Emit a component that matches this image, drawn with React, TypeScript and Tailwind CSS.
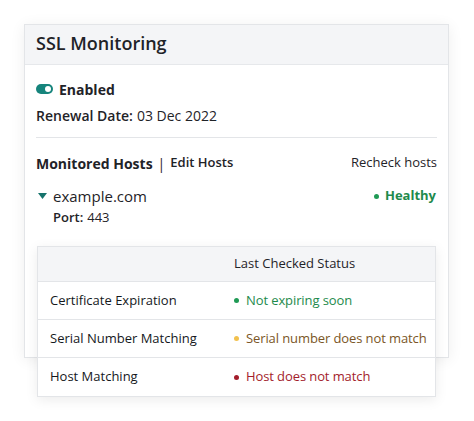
import React from 'react';

type Check = {
  label: string;
  status: string;
  dot: string;
  text: string;
};

const checks: Check[] = [
  { label: 'Certificate Expiration', status: 'Not expiring soon', dot: 'bg-[#1f9a55]', text: 'text-[#1e8a4c]' },
  { label: 'Serial Number Matching', status: 'Serial number does not match', dot: 'bg-[#f2c14e]', text: 'text-[#7a5526]' },
  { label: 'Host Matching', status: 'Host does not match', dot: 'bg-[#a31d2b]', text: 'text-[#a31d2b]' },
];

function Toggle() {
  return (
    <span className="relative inline-flex h-[10px] w-[17px] items-center rounded-full bg-[#16847c]">
      <span className="absolute right-[2px] h-[6px] w-[6px] rounded-full bg-white" />
    </span>
  );
}

export default function App() {
  return (
    <div className="h-[421px] w-[474px] bg-white pl-[24px] pt-[24px] font-['Open_Sans',sans-serif] text-[#1f2328]">
      <div className="h-[334px] w-[425px] border border-[#e3e5e8] bg-white shadow-[0_2px_14px_rgba(0,0,0,0.07)]">
        <div className="flex h-[40px] items-center border-b border-[#e6e8eb] bg-[#f4f5f7] px-[11px] pb-[4px]">
          <h1 className="text-[18px] font-semibold leading-none">SSL Monitoring</h1>
        </div>

        <div className="px-[11px] pt-[14px]">
          <div className="flex h-[20px] items-center gap-[6px]">
            <Toggle />
            <span className="text-[14px] font-bold">Enabled</span>
          </div>
          <div className="mt-[6px] flex h-[20px] items-center text-[14px]">
            <span className="font-semibold">Renewal Date:</span>
            <span className="ml-[4px]">03 Dec 2022</span>
          </div>

          <div className="mt-[12px] border-t border-[#e3e5e8]" />

          <div className="mt-[15px] flex h-[20px] items-center justify-between">
            <div className="flex items-center">
              <span className="text-[14px] font-bold">Monitored Hosts</span>
              <span className="mx-[5px] text-[14px]">|</span>
              <span className="text-[13px] font-semibold">Edit Hosts</span>
            </div>
            <span className="text-[13px]">Recheck hosts</span>
          </div>

          <div className="mt-[12px] flex h-[22px] items-center justify-between">
            <div className="flex items-center">
              <svg width="9" height="6" viewBox="0 0 9 6" className="ml-[2px] mr-[6px]">
                <path d="M0 0 H9 L4.5 6 Z" fill="#16736c" />
              </svg>
              <span className="text-[15px] font-medium">example.com</span>
            </div>
            <div className="flex items-center gap-[6px] pr-[1px]">
              <span className="h-[5px] w-[5px] rounded-full bg-[#1f9a55]" />
              <span className="text-[13px] font-bold text-[#1e8a4c]">Healthy</span>
            </div>
          </div>

          <div className="ml-[17px] mt-[2px] flex h-[18px] items-center text-[13px]">
            <span className="font-semibold">Port:</span>
            <span className="ml-[4px]">443</span>
          </div>

          <div className="ml-[1px] mt-[19px] w-[399px] border border-[#e3e5e8] bg-white shadow-[0_3px_12px_rgba(0,0,0,0.08)]">
            <div className="flex h-[35px] items-center border-b border-[#e3e5e8] bg-[#f4f5f7] text-[13px] font-medium">
              <span className="w-[196px]" />
              <span>Last Checked Status</span>
            </div>
            {checks.map((c, i) => (
              <div
                key={c.label}
                className={`flex h-[38px] items-center text-[13px] ${i < checks.length - 1 ? 'border-b border-[#e3e5e8]' : ''}`}
              >
                <span className="w-[196px] pl-[12px] font-medium text-[#15181c]">{c.label}</span>
                <span className={`h-[5px] w-[5px] rounded-full ${c.dot}`} />
                <span className={`ml-[7px] tracking-[-0.1px] ${c.text}`}>{c.status}</span>
              </div>
            ))}
          </div>
        </div>
      </div>
    </div>
  );
}
